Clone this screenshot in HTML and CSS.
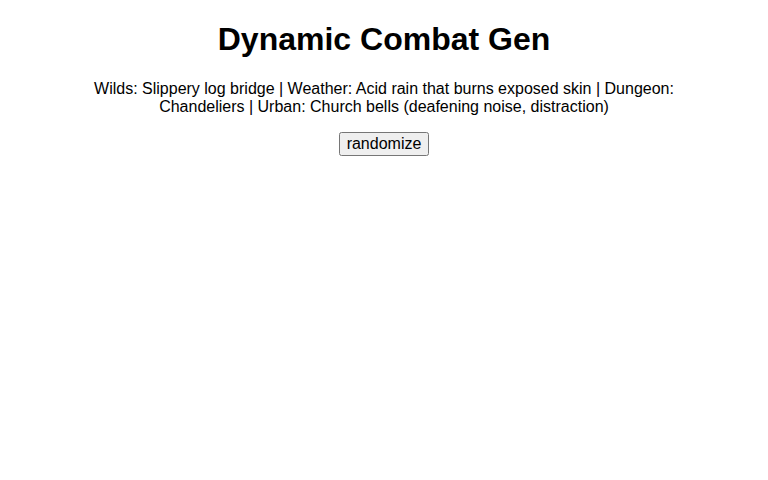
FILE: index.html
```html
<!DOCTYPE html>
<html lang="en">
<head>
<meta charset="utf-8">
<title>Dynamic Combat Gen</title>
<link rel="stylesheet" href="styles.css">
</head>
<body>
<main class="app">
  <h1 class="title">Dynamic Combat Gen</h1>
  <p class="hazards">Wilds: Slippery log bridge | Weather: Acid rain that burns exposed skin | Dungeon: Chandeliers | Urban: Church bells (deafening noise, distraction)</p>
  <button class="roll" type="button">randomize</button>
</main>
</body>
</html>
```

FILE: styles.css
```css
body {
  margin: 0;
  background: #fff;
  color: #000;
  font-family: "Liberation Sans", Arial, sans-serif;
}

.app {
  max-width: 600px;
  margin: 0 auto;
  text-align: center;
}

.title {
  font-size: 32px;
  font-weight: bold;
  margin: 21.44px 0;
}

.hazards {
  font-size: 16px;
  margin: 0 0 16px;
}

.roll {
  font-family: "Liberation Sans", Arial, sans-serif;
  font-size: 16px;
  padding: 1px 6px;
}
```
